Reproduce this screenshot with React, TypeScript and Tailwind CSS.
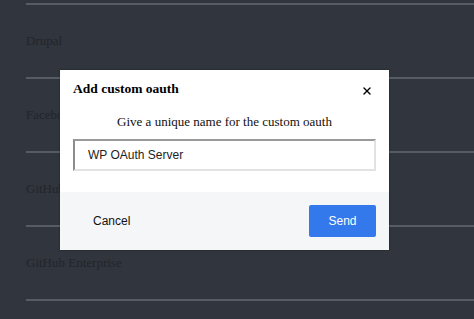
import { X } from "lucide-react";

const rows = ["Drupal", "Facebook", "GitHub", "GitHub Enterprise"];

export default function App() {
  return (
    <div className="relative h-[319px] w-[474px] overflow-hidden bg-[#31353d]">
      <div className="ml-[26px] mt-[3px] border-t-2 border-[#575b63]">
        {rows.map((name) => (
          <div
            key={name}
            className="flex h-[74px] items-center border-b-2 border-[#575b63] font-['Liberation_Serif',serif] text-[13px] text-[#22252b]"
          >
            {name}
          </div>
        ))}
      </div>

      <div className="absolute left-[60px] top-[70px] flex w-[329px] flex-col bg-white shadow-[0_0_2px_rgba(0,0,0,0.4)]">
        <div className="flex h-[38px] items-center justify-between px-[13px]">
          <h2 className="font-['Liberation_Serif',serif] text-[13.5px] font-bold text-black">
            Add custom oauth
          </h2>
          <button className="mr-[3px] mt-[4px] text-black">
            <X size={12} strokeWidth={2.8} />
          </button>
        </div>

        <div className="px-[13px] pb-[21px] pt-[4px]">
          <p className="text-center font-['Liberation_Serif',serif] text-[13px] leading-[20px] text-[#111]">
            Give a unique name for the custom oauth
          </p>
          <input
            defaultValue="WP OAuth Server"
            className="mt-[7px] h-[32px] w-full border-2 border-b-[#e2e2e2] border-l-[#8c8c8c] border-r-[#e2e2e2] border-t-[#9a9a9a] px-[13px] font-['Liberation_Sans',sans-serif] text-[12px] text-[#222] outline-none"
          />
        </div>

        <div className="flex h-[58px] items-center justify-between bg-[#f5f6f8] px-[13px]">
          <button className="px-[20px] font-['Liberation_Sans',sans-serif] text-[12px] text-[#111]">
            Cancel
          </button>
          <button className="h-[32px] w-[67px] rounded-[2px] bg-[#3379ec] font-['Liberation_Sans',sans-serif] text-[12px] text-white">
            Send
          </button>
        </div>
      </div>
    </div>
  );
}
